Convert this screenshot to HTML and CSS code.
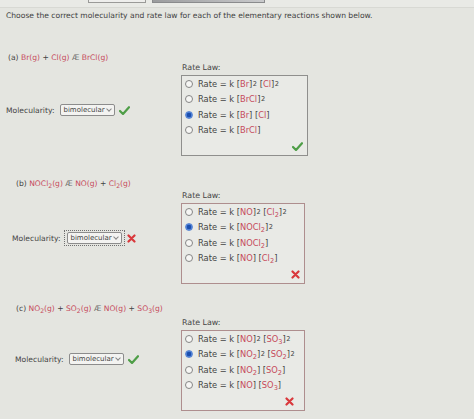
FILE: index.html
```html
<!DOCTYPE html>
<html>
<head>
<meta charset="utf-8">
<link rel="stylesheet" href="styles.css">
</head>
<body>
<div class="topbar"><span class="tab tab1"></span><span class="tab tab2"></span></div>
<div class="page">
  <p class="intro">Choose the correct molecularity and rate law for each of the elementary reactions shown below.</p>

  <section class="q q-a">
    <div class="q-title">(a) <span class="chem">Br(g)</span> + <span class="chem">Cl(g)</span> <span class="arrow">Æ</span> <span class="chem">BrCl(g)</span></div>
    <div class="q-body">
      <div class="mol">
        <span class="mol-label">Molecularity:</span>
        <span class="focus"><span class="select">bimolecular<span class="chev"></span></span></span>
        <svg class="mark-icon" width="11" height="9" viewBox="0 0 11 9"><path d="M1 5 L4 8 L10 1.2" fill="none" stroke="#4e9e47" stroke-width="2.2" stroke-linecap="round" stroke-linejoin="round"/></svg>
      </div>
      <div class="rate">
        <div class="rate-label">Rate Law:</div>
        <div class="rate-box">
          <div class="opt"><span class="radio"></span>Rate = k [<span class="chem">Br</span>]<sup>2</sup>&nbsp;[<span class="chem">Cl</span>]<sup>2</sup></div>
          <div class="opt"><span class="radio"></span>Rate = k [<span class="chem">BrCl</span>]<sup>2</sup></div>
          <div class="opt"><span class="radio on"></span>Rate = k [<span class="chem">Br</span>] [<span class="chem">Cl</span>]</div>
          <div class="opt"><span class="radio"></span>Rate = k [<span class="chem">BrCl</span>]</div>
          <div class="result"><svg width="11" height="9" viewBox="0 0 11 9"><path d="M1 5 L4 8 L10 1.2" fill="none" stroke="#4e9e47" stroke-width="2.2" stroke-linecap="round" stroke-linejoin="round"/></svg></div>
        </div>
      </div>
    </div>
  </section>

  <section class="q q-b">
    <div class="q-title">(b) <span class="chem">NOCl<sub>2</sub>(g)</span> <span class="arrow">Æ</span> <span class="chem">NO(g)</span> + <span class="chem">Cl<sub>2</sub>(g)</span></div>
    <div class="q-body">
      <div class="mol">
        <span class="mol-label">Molecularity:</span>
        <span class="focus focused"><span class="select">bimolecular<span class="chev"></span></span></span>
        <svg class="mark-icon" width="9" height="9" viewBox="0 0 9 9"><path d="M1.5 1.5 L7.5 7.5 M7.5 1.5 L1.5 7.5" fill="none" stroke="#d9383c" stroke-width="2.2" stroke-linecap="round"/></svg>
      </div>
      <div class="rate">
        <div class="rate-label">Rate Law:</div>
        <div class="rate-box wrong">
          <div class="opt"><span class="radio"></span>Rate = k [<span class="chem">NO</span>]<sup>2</sup>&nbsp;[<span class="chem">Cl<sub>2</sub></span>]<sup>2</sup></div>
          <div class="opt"><span class="radio on"></span>Rate = k [<span class="chem">NOCl<sub>2</sub></span>]<sup>2</sup></div>
          <div class="opt"><span class="radio"></span>Rate = k [<span class="chem">NOCl<sub>2</sub></span>]</div>
          <div class="opt"><span class="radio"></span>Rate = k [<span class="chem">NO</span>] [<span class="chem">Cl<sub>2</sub></span>]</div>
          <div class="result"><svg width="9" height="9" viewBox="0 0 9 9"><path d="M1.5 1.5 L7.5 7.5 M7.5 1.5 L1.5 7.5" fill="none" stroke="#d9383c" stroke-width="2.2" stroke-linecap="round"/></svg></div>
        </div>
      </div>
    </div>
  </section>

  <section class="q q-c">
    <div class="q-title">(c) <span class="chem">NO<sub>2</sub>(g)</span> + <span class="chem">SO<sub>2</sub>(g)</span> <span class="arrow">Æ</span> <span class="chem">NO(g)</span> + <span class="chem">SO<sub>3</sub>(g)</span></div>
    <div class="q-body">
      <div class="mol">
        <span class="mol-label">Molecularity:</span>
        <span class="focus"><span class="select">bimolecular<span class="chev"></span></span></span>
        <svg class="mark-icon" width="11" height="9" viewBox="0 0 11 9"><path d="M1 5 L4 8 L10 1.2" fill="none" stroke="#4e9e47" stroke-width="2.2" stroke-linecap="round" stroke-linejoin="round"/></svg>
      </div>
      <div class="rate">
        <div class="rate-label">Rate Law:</div>
        <div class="rate-box wrong">
          <div class="opt"><span class="radio"></span>Rate = k [<span class="chem">NO</span>]<sup>2</sup>&nbsp;[<span class="chem">SO<sub>3</sub></span>]<sup>2</sup></div>
          <div class="opt"><span class="radio on"></span>Rate = k [<span class="chem">NO<sub>2</sub></span>]<sup>2</sup>&nbsp;[<span class="chem">SO<sub>2</sub></span>]<sup>2</sup></div>
          <div class="opt"><span class="radio"></span>Rate = k [<span class="chem">NO<sub>2</sub></span>] [<span class="chem">SO<sub>2</sub></span>]</div>
          <div class="opt"><span class="radio"></span>Rate = k [<span class="chem">NO</span>] [<span class="chem">SO<sub>3</sub></span>]</div>
          <div class="result"><svg width="9" height="9" viewBox="0 0 9 9"><path d="M1.5 1.5 L7.5 7.5 M7.5 1.5 L1.5 7.5" fill="none" stroke="#d9383c" stroke-width="2.2" stroke-linecap="round"/></svg></div>
        </div>
      </div>
    </div>
  </section>
</div>
</body>
</html>
```

FILE: styles.css
```css
* { box-sizing: border-box; }
html, body {
  margin: 0;
  padding: 0;
  background: #e4e5e0;
  width: 474px;
  height: 419px;
  overflow: hidden;
  font-family: "DejaVu Sans", Verdana, sans-serif;
  color: #444;
}
.topbar {
  height: 8px;
  position: relative;
  border-bottom: 1px solid #d8d9d4;
  background: #e9eae6;
}
.tab {
  position: absolute;
  top: 0;
  height: 3px;
  border: 1px solid #9a9a98;
  border-top: none;
}
.tab1 { left: 88px; width: 58px; background: #eeeeec; }
.tab2 { left: 152px; width: 113px; background: linear-gradient(90deg, #9b9c9e, #c9cacc); border-color: #8a8b8d; }
.page {
  height: 411px;
}
.intro {
  margin: 0;
  padding: 2px 0 0 6px;
  font-size: 7.6px;
  line-height: 12px;
  height: 14px;
  color: #3f3f3f;
  white-space: nowrap;
}
.chem { color: #c64a5c; }
.arrow { color: #6a6a6a; }
sub, sup { font-size: 80%; line-height: 0; }
sub { vertical-align: -2px; }
sup { vertical-align: 3.5px; padding-left: 0.5px; }

.q { font-size: 7.6px; }
.q-title { line-height: 11px; height: 11px; white-space: nowrap; }
.q-body { display: grid; grid-template-columns: 181px auto; }
.mol { display: flex; align-items: center; gap: 2px; height: 14px; white-space: nowrap; }
.mol-label { margin-right: 2px; }
.focus { display: inline-flex; padding: 1px; border: 1px dotted transparent; }
.focus.focused { border-color: #707070; padding: 1px 2px; }
.select {
  display: inline-flex;
  align-items: center;
  justify-content: space-between;
  width: 55px;
  height: 12px;
  padding: 0 3px 0 2px;
  background: #f3f3f1;
  border: 1px solid #8c8c8c;
  border-radius: 2px;
  font-size: 7px;
  color: #444;
}
.chev {
  width: 4px;
  height: 4px;
  border-right: 1px solid #888;
  border-bottom: 1px solid #888;
  transform: rotate(45deg);
  margin-top: -2px;
}
.rate-label { height: 11px; line-height: 10px; padding-left: 1px; font-size: 7.9px; }
.rate-box {
  width: 127px;
  border: 1px solid #8f8f8d;
  background: #e9eae6;
  padding: 0 0 0 3px;
}
.rate-box.wrong { width: 124px; border-color: #ae8e8e; }
.opt {
  display: flex;
  align-items: center;
  height: 15.5px;
  white-space: nowrap;
  font-size: 8.3px;
}
.radio {
  width: 8px;
  height: 8px;
  border-radius: 50%;
  border: 1px solid #858585;
  background: #f6f6f4;
  margin-right: 5px;
  flex: none;
}
.radio.on {
  border-color: #5a86d2;
  background: radial-gradient(circle, #1c4fae 0 2px, #4f82da 2.6px);
}
.result {
  height: 17px;
  display: flex;
  align-items: center;
  justify-content: flex-end;
  padding-right: 4px;
}

.q-a { padding-top: 30px; height: 155px; }
.q-a .q-title { padding-left: 8px; }
.q-a .mol { padding-left: 6px; margin-top: 40px; }
.q-a .rate-box { margin-top: 1px; }

.q-b { padding-top: 1px; height: 126px; }
.q-b .q-title { padding-left: 16px; }
.q-b .q-body { margin-top: 2px; }
.q-b .mol { padding-left: 12px; margin-top: 40px; }
.q-b .rate-box { margin-top: 1px; }

.q-c { height: 130px; }
.q-c .q-title { padding-left: 16px; }
.q-c .q-body { margin-top: 4px; }
.q-c .mol { padding-left: 15px; margin-top: 34px; }
.q-c .rate-box { margin-top: 1px; }
.q-c .result { padding-right: 10px; }
```
